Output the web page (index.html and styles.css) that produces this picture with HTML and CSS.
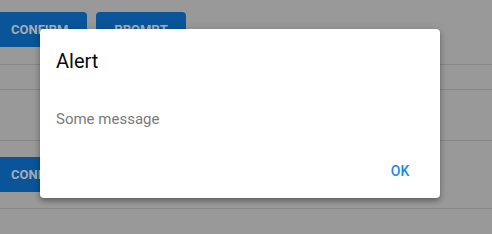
FILE: index.html
```html
<!DOCTYPE html>
<html>
<head>
<meta charset="utf-8">
<link rel="stylesheet" href="styles.css">
</head>
<body>
<div class="page">
  <div class="btn-row top">
    <button class="btn btn-confirm">Confirm</button>
    <button class="btn btn-prompt">Prompt</button>
  </div>
  <div class="divider d1"></div>
  <div class="section s1"></div>
  <div class="divider"></div>
  <div class="section s2"></div>
  <div class="divider"></div>
  <div class="btn-row bottom">
    <button class="btn btn-confirm">Confirm</button>
  </div>
  <div class="divider d4"></div>
</div>
<div class="dialog" role="dialog">
  <h2 class="dialog-title">Alert</h2>
  <p class="dialog-text">Some message</p>
  <div class="dialog-actions">
    <button class="dialog-btn">OK</button>
  </div>
</div>
</body>
</html>
```
FILE: styles.css
```css
html, body {
  margin: 0;
  padding: 0;
}
body {
  background: #999999;
  width: 492px;
  height: 234px;
  overflow: hidden;
  font-family: Roboto, "Liberation Sans", sans-serif;
  position: relative;
}
.page {
  display: flex;
  flex-direction: column;
}
.btn-row {
  display: flex;
  gap: 9px;
}
.btn-row.top {
  margin-top: 12px;
  margin-bottom: 17px;
}
.btn-row.bottom {
  margin-top: 16px;
  margin-bottom: 16px;
}
.btn {
  font-family: Roboto, "Liberation Sans", sans-serif;
  font-weight: 700;
  font-size: 13px;
  text-transform: uppercase;
  color: #a9adb3;
  background: #0a5599;
  border: none;
  border-radius: 4px;
  height: 35px;
  padding: 0 11px;
  display: flex;
  align-items: center;
}
.btn-confirm {
  width: 87px;
  border-top-left-radius: 0;
  border-bottom-left-radius: 0;
}
.btn-prompt {
  width: 90px;
  justify-content: center;
}
.divider {
  height: 1px;
  background: #878787;
}
.s1 { height: 24px; }
.s2 { height: 50px; }
.dialog {
  position: absolute;
  left: 40px;
  top: 29px;
  width: 400px;
  height: 169px;
  box-sizing: border-box;
  background: #ffffff;
  border-radius: 4px;
  box-shadow: 0 3px 5px rgba(0,0,0,0.3), 0 1px 10px rgba(0,0,0,0.12);
  display: flex;
  flex-direction: column;
  padding-top: 16px;
}
.dialog-title {
  margin: 0;
  padding: 0 16px;
  font-size: 20px;
  line-height: 32px;
  font-weight: 400;
  color: #0a0a0a;
}
.dialog-text {
  margin: 30px 0 0;
  padding: 0 16px;
  font-size: 15px;
  line-height: 24px;
  color: #7a7a7a;
}
.dialog-actions {
  margin-top: auto;
  display: flex;
  justify-content: flex-end;
  padding: 0 8px 9px;
}
.dialog-btn {
  font-family: Roboto, "Liberation Sans", sans-serif;
  font-weight: 500;
  font-size: 14px;
  color: #1e88e5;
  background: transparent;
  border: none;
  min-width: 64px;
  height: 36px;
  padding: 0 8px;
}
```
